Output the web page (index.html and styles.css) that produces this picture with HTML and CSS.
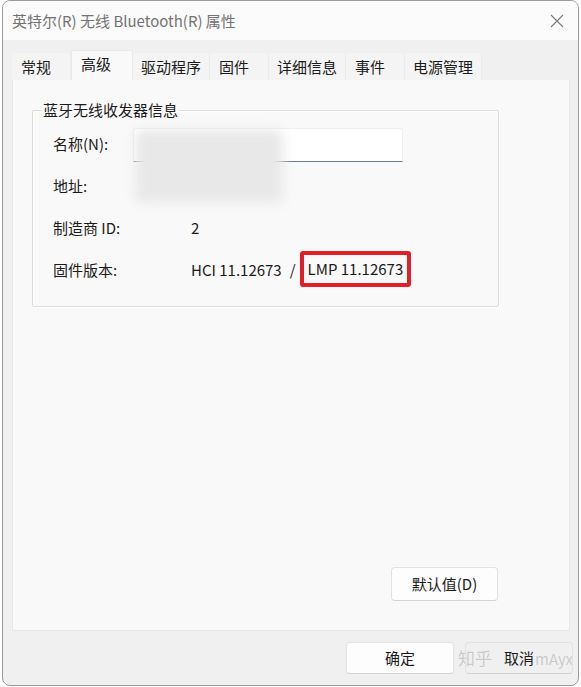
FILE: index.html
```html
<!DOCTYPE html>
<html lang="zh-CN">
<head>
<meta charset="utf-8">
<title>英特尔(R) 无线 Bluetooth(R) 属性</title>
<link rel="stylesheet" href="styles.css">
</head>
<body>
<div class="window">
  <div class="titlebar">
    <span class="title">英特尔(R) 无线 Bluetooth(R) 属性</span>
    <svg class="close" width="14" height="14" viewBox="0 0 14 14"><path d="M1 1L13 13M13 1L1 13" stroke="#7a7a7a" stroke-width="1.1" fill="none"/></svg>
  </div>
  <div class="body">
    <div class="tabs">
      <div class="tab short">常规</div>
      <div class="tab selected">高级</div>
      <div class="tab">驱动程序</div>
      <div class="tab short">固件</div>
      <div class="tab">详细信息</div>
      <div class="tab short">事件</div>
      <div class="tab">电源管理</div>
    </div>
    <div class="panel">
      <fieldset class="group">
        <legend>蓝牙无线收发器信息</legend>
        <div class="rows">
          <div class="row">
            <span class="label">名称(N):</span>
            <span class="textbox"></span>
          </div>
          <div class="row">
            <span class="label">地址:</span>
            <span class="value"></span>
          </div>
          <div class="row">
            <span class="label">制造商 ID:</span>
            <span class="value">2</span>
          </div>
          <div class="row">
            <span class="label">固件版本:</span>
            <span class="value fw"><span>HCI 11.12673</span><span class="slash">/</span><span class="mark">LMP 11.12673</span></span>
          </div>
          <div class="blur"></div>
        </div>
      </fieldset>
      <div class="default-row">
        <button class="btn default">默认值(D)</button>
      </div>
    </div>
    <div class="footer">
      <button class="btn">确定</button>
      <button class="btn cancel">取消</button>
      <div class="watermark"><span>知乎</span><span class="wm2">mAyx</span></div>
    </div>
  </div>
</div>
</body>
</html>
```
FILE: styles.css
```css
* { box-sizing: border-box; }
html, body { margin: 0; padding: 0; background: #ffffff; }
body {
  font-family: "Noto Sans CJK SC", "Noto Sans", sans-serif;
  font-size: 15px;
  color: #1b1b1b;
}
.window {
  margin: 0 2px 0 2px;
  width: 577px;
  height: 686px;
  border: 1px solid #9a9a9a;
  border-radius: 8px;
  overflow: hidden;
  display: flex;
  flex-direction: column;
  background: #f0f0f0;
}
.titlebar {
  height: 39px;
  flex: none;
  background: #fbfbfb;
  display: flex;
  align-items: center;
  justify-content: space-between;
  padding: 0 10px 0 9px;
}
.title { color: #737373; font-size: 15px; line-height: 20px; }
.close { display: block; margin-right: 4px; }
.body {
  flex: 1;
  display: flex;
  flex-direction: column;
  padding: 10px 0 0 9px;
}
.tabs {
  display: flex;
  align-items: flex-end;
  height: 30px;
}
.tab {
  height: 27px;
  padding: 0 8px;
  line-height: 27px;
  background: #f4f4f4;
  border-right: 1px solid #ebebeb;
  white-space: nowrap;
}
.tab.short { min-width: 59px; padding-left: 9px; }
.tab.selected {
  height: 30px;
  min-width: 62px;
  padding: 0 8px 4px 9px;
  line-height: 26px;
  background: #f9f9f9;
  border: 1px solid #e9e9e9;
  border-bottom: none;
}
.panel {
  width: 558px;
  height: 551px;
  background: #f9f9f9;
  border: 1px solid #e8e8e8;
  border-top: none;
  padding: 20px 0 29px 19px;
  display: flex;
  flex-direction: column;
}
.group {
  margin: 0;
  width: 467px;
  height: 207px;
  border: 1px solid #dcdcdc;
  box-shadow: inset 1px 1px 0 #ffffff, 1px 1px 0 #ffffff;
  border-radius: 2px;
  padding: 0 0 12px 9px;
}
.group legend {
  padding: 0 1px;
  line-height: 20px;
  font-size: 15px;
  color: #1b1b1b;
}
.rows {
  position: relative;
  padding: 2px 0 0 11px;
}
.row {
  height: 42px;
  display: grid;
  grid-template-columns: 80px 58px 1fr;
  align-items: center;
}
.label { grid-column: 1; white-space: nowrap; }
.value { grid-column: 3; white-space: nowrap; }
.textbox {
  grid-column: 2 / 4;
  width: 270px;
  height: 34px;
  margin-top: 4px;
  background: #ffffff;
  border: 1px solid #eeeeee;
  border-bottom: 1px solid #6d7a8b;
  border-radius: 3px 3px 0 0;
}
.fw { display: flex; align-items: center; }
.slash { margin: 0 4px 0 8px; }
.mark {
  display: inline-block;
  border: 4px solid #e11f27;
  border-radius: 3px;
  padding: 0 4px 0 4px;
  line-height: 28px;
}
.blur {
  position: absolute;
  left: 93px;
  top: 10px;
  width: 148px;
  height: 73px;
  background: #e8e8e9;
  filter: blur(6px);
  border-radius: 6px;
}
.default-row {
  margin-top: auto;
  width: 466px;
  display: flex;
  justify-content: flex-end;
}
.btn {
  font-family: "Noto Sans CJK SC", "Noto Sans", sans-serif;
  font-size: 15px;
  color: #1b1b1b;
  background: #fdfdfd;
  border: 1px solid #e2e2e2;
  border-bottom-color: #d4d4d4;
  border-radius: 4px;
  width: 108px;
  height: 32px;
  padding: 0;
  line-height: 30px;
}
.btn.default { width: 107px; height: 34px; }
.footer {
  position: relative;
  flex: 1;
  display: flex;
  justify-content: flex-end;
  align-items: flex-start;
  gap: 11px;
  padding: 11px 5px 0 0;
}
.cancel { position: relative; z-index: 1; background: transparent; }
.watermark {
  position: absolute;
  left: 446px;
  top: 15px;
  font-size: 17px;
  line-height: 24px;
  color: #c9c9c9;
  text-shadow: 0 0 1px #ffffff;
  display: flex;
  align-items: baseline;
  white-space: nowrap;
}
.wm2 { margin-left: 43px; font-size: 15px; }
```
